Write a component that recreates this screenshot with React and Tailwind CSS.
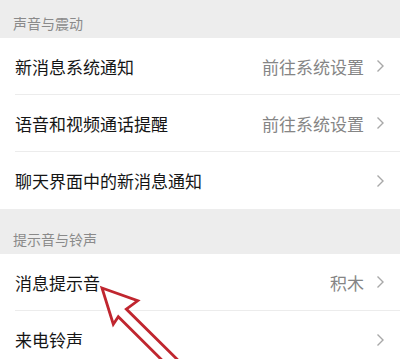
const cjk = { fontFamily: '"Noto Sans CJK SC", "Noto Sans", sans-serif' };

function Chevron() {
  return (
    <svg width="9" height="14" viewBox="0 0 9 14" className="ml-[12px] shrink-0">
      <polyline points="1.5,1.5 7,7 1.5,12.5" fill="none" stroke="#a8a8a8" strokeWidth="1.4" />
    </svg>
  );
}

function Header({ children, height }) {
  return (
    <div
      className="flex items-end bg-[#ededed] pb-[8px] pl-[13px] text-[14px] leading-none text-[#8a8a8a]"
      style={{ height }}
    >
      {children}
    </div>
  );
}

function Row({ label, value, divider }) {
  return (
    <div className="bg-white pl-[15px]">
      <div
        className={`flex h-[57px] items-center pr-[15px] ${divider ? "border-b border-[#ececec]" : ""}`}
      >
        <span className="flex-1 text-[17px] leading-none text-[#151515]">{label}</span>
        {value && <span className="text-[17px] leading-none text-[#858585]">{value}</span>}
        <Chevron />
      </div>
    </div>
  );
}

export default function App() {
  return (
    <div className="relative h-[359px] w-[400px] overflow-hidden bg-white" style={cjk}>
      <Header height={38}>声音与震动</Header>
      <Row label="新消息系统通知" value="前往系统设置" divider />
      <Row label="语音和视频通话提醒" value="前往系统设置" divider />
      <Row label="聊天界面中的新消息通知" />
      <Header height={45}>提示音与铃声</Header>
      <Row label="消息提示音" value="积木" divider />
      <Row label="来电铃声" />

      <svg className="pointer-events-none absolute left-0 top-0" width="400" height="359" viewBox="0 0 400 359">
        <polygon
          points="102,288 137.7,300.8 126.3,309.1 190,372 182,380 118.3,316.7 113.3,324.2"
          fill="#ffffff"
          stroke="#c0262f"
          strokeWidth="2.8"
          strokeLinejoin="miter"
        />
      </svg>
    </div>
  );
}
